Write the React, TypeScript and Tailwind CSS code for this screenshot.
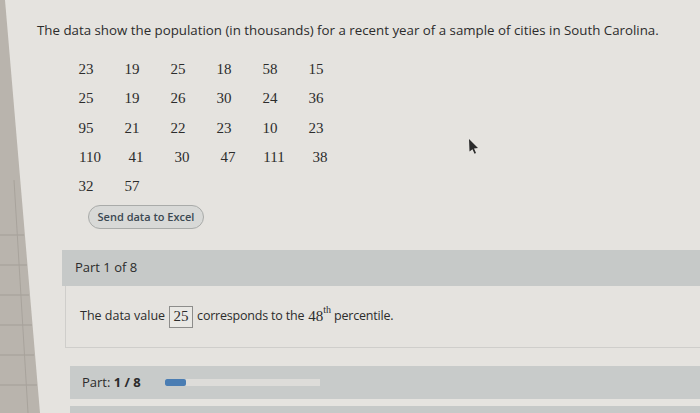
import React from 'react'

const rows: string[][] = [
  ['23', '19', '25', '18', '58', '15'],
  ['25', '19', '26', '30', '24', '36'],
  ['95', '21', '22', '23', '10', '23'],
  ['110', '41', '30', '47', '111', '38'],
  ['32', '57'],
]

const Cursor = () => (
  <svg width="14" height="18" viewBox="0 0 14 18" className="absolute left-[467px] top-[138px]">
    <path d="M2 1 L11 10 L7 10.5 L9 15 L7.5 15.7 L5.5 11.2 L2.5 13.5 Z" fill="#2b2b2b" />
  </svg>
)

const App = () => {
  return (
    <div className="relative w-[700px] h-[413px] overflow-hidden bg-[#e5e3df] text-[#2c2c2c] font-['Open_Sans',sans-serif]">
      {/* screen edge on the left of the photo */}
      <svg width="60" height="413" className="absolute left-0 top-0">
        <polygon points="0,0 5,0 40,413 0,413" fill="#b9b4ad" />
        <line x1="0" y1="235" x2="24" y2="235" stroke="#a39e97" />
        <line x1="0" y1="265" x2="27" y2="265" stroke="#a39e97" />
        <line x1="0" y1="295" x2="29" y2="295" stroke="#a39e97" />
        <line x1="0" y1="325" x2="32" y2="325" stroke="#a39e97" />
        <line x1="0" y1="355" x2="34" y2="355" stroke="#a39e97" />
        <line x1="0" y1="385" x2="37" y2="385" stroke="#a39e97" />
        <line x1="14" y1="180" x2="28" y2="413" stroke="#a8a39c" />
      </svg>

      <div className="flex flex-col pl-[37px] pt-[21px]">
        <p className="text-[13.3px] font-medium">
          The data show the population (in thousands) for a recent year of a sample of cities in South Carolina.
        </p>

        <div className="ml-[26px] mt-[17px] flex flex-col gap-[10.3px] font-['Liberation_Serif',serif] text-[15px]">
          {rows.map((r, i) => (
            <div
              key={i}
              className={`grid grid-cols-[46px_46px_46px_46px_46px_46px] h-[19px] items-center ${i === 3 ? 'ml-[4px]' : ''}`}>
              {r.map((v, j) => (
                <span key={j} className="text-center">
                  {v}
                </span>
              ))}
            </div>
          ))}
        </div>

        <button className="ml-[51px] mt-[11px] w-[116px] h-[24px] rounded-full border border-[#a9aba9] bg-[#d8d9d7] text-[11px] font-semibold text-[#3b4852]">
          Send data to Excel
        </button>
      </div>

      <div className="ml-[62px] mt-[21px] flex flex-col">
        <div className="h-[36px] bg-[#c6c9c8] flex items-center pl-[13px] text-[13px]">Part 1 of 8</div>
        <div className="ml-[3px] h-[62px] border-l border-b border-[#cfcecb] flex items-center pl-[14px] text-[12.5px]">
          <span>The data value</span>
          <span className="mx-[4px] border border-[#8d8d8b] w-[24px] justify-center h-[22px] flex items-center bg-[#e9e8e4] font-['Liberation_Serif',serif] text-[15px]">
            25
          </span>
          <span className="tracking-[-0.2px]">corresponds to the</span>
          <span className="ml-[4px] font-['Liberation_Serif',serif] text-[15px] relative">
            48<span className="text-[10px] relative -top-[8px]">th</span>
          </span>
          <span className="ml-[3px] tracking-[-0.2px]">percentile.</span>
        </div>
        <div className="ml-[8px] mt-[18px] h-[33px] bg-[#c8cbca] flex items-center pl-[12px] text-[13px] gap-[24px]">
          <span>
            Part: <span className="font-bold">1&nbsp;/&nbsp;8</span>
          </span>
          <div className="flex w-[155px] h-[7px] bg-[#dddcd9]">
            <div className="w-[21px] h-full bg-[#4a7db3] rounded-[2px]" />
          </div>
        </div>
        <div className="ml-[8px] mt-[7px] h-[20px] bg-[#c6c9c8]" />
      </div>

      <Cursor />
    </div>
  )
}

export default App
